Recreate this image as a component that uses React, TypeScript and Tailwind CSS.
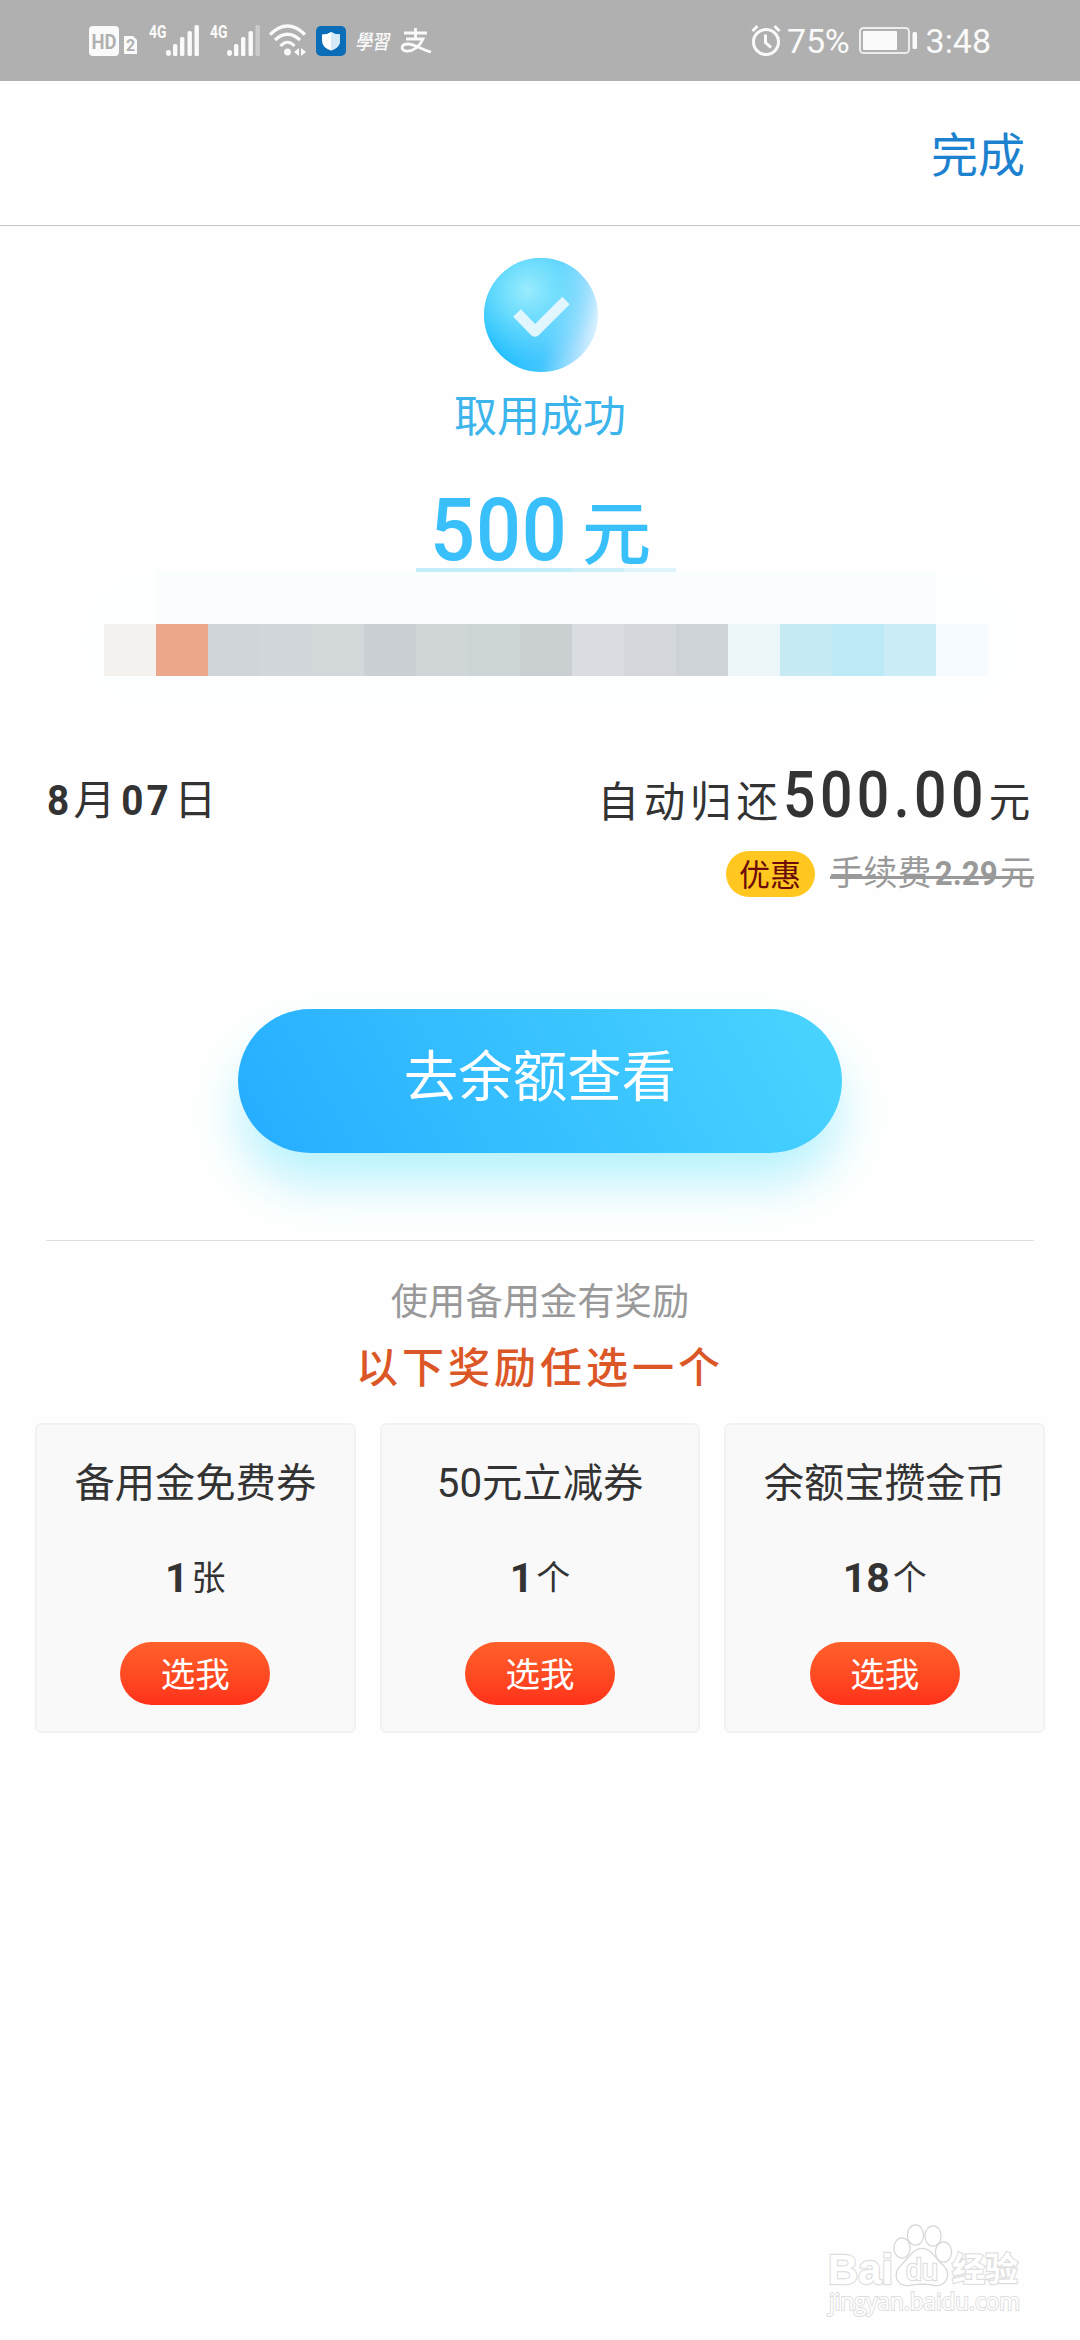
import type { ReactNode } from "react";

interface Reward {
  title: string;
  count: string;
  unit: string;
}

const rewards: Reward[] = [
  { title: "备用金免费券", count: "1", unit: "张" },
  { title: "50元立减券", count: "1", unit: "个" },
  { title: "余额宝攒金币", count: "18", unit: "个" },
];

const mosaic = [
  "bg-[#f5f1ee]",
  "bg-[#eda88b]",
  "bg-[#cfd5d9]",
  "bg-[#d2d7db]",
  "bg-[#d3d8da]",
  "bg-[#cbd0d4]",
  "bg-[#d0d5d8]",
  "bg-[#cdd4d6]",
  "bg-[#cad0d2]",
  "bg-[#d9dde1]",
  "bg-[#d4d8dc]",
  "bg-[#ced3d7]",
  "bg-[#edf6f8]",
  "bg-[#c7ebf5]",
  "bg-[#bde9f6]",
  "bg-[#c9ecf6]",
  "bg-[#f6fbff]",
];

function Signal({ weak = false }: { weak?: boolean }) {
  return (
    <svg className="overflow-visible" width="51" height="34" viewBox="0 0 51 34" fill="#fafafa">
      <text x="0" y="13.5" fontFamily="Roboto" fontWeight="700" fontSize="17.5" textLength="17.5" lengthAdjust="spacingAndGlyphs">
        4G
      </text>
      <rect x="17" y="26" width="5" height="6" rx="2.4" />
      <rect x="24" y="20" width="4.4" height="12" rx="1.6" />
      <rect x="31" y="13" width="4.4" height="19" rx="1.6" />
      <rect x="38.5" y="7" width="4.4" height="25" rx="1.6" />
      <rect x="45.5" y="1" width="4.4" height="31" rx="1.6" fill={weak ? "#cbcbcb" : "#fafafa"} />
    </svg>
  );
}

function StatusBar() {
  return (
    <div className="flex h-[81px] items-start bg-[#b0b0b0] pt-6 text-[#fafafa]">
      <svg className="ml-[89px]" width="50" height="34" viewBox="0 0 50 34">
        <rect x="0" y="2" width="30" height="30" rx="4" fill="#fafafa" />
        <text x="2.5" y="24.5" fontFamily="Roboto" fontWeight="700" fontSize="20" fill="#b0b0b0" textLength="25" lengthAdjust="spacingAndGlyphs">
          HD
        </text>
        <path d="M35 12h9l4 4v14h-13z" fill="#fafafa" />
        <text x="37" y="27" fontFamily="Roboto" fontWeight="700" fontSize="16" fill="#b0b0b0">
          2
        </text>
      </svg>
      <div className="ml-[10px]">
        <Signal />
      </div>
      <div className="ml-[10px]">
        <Signal weak />
      </div>
      <svg className="ml-2" width="38" height="34" viewBox="0 0 38 34" fill="none" stroke="#fafafa" strokeWidth="3.2">
        <path d="M1 10.5Q18.5 -6.5 36 10.5" />
        <path d="M6 16Q18.5 4.5 31 16" />
        <path d="M11.5 22Q18.5 14.5 25.5 22" />
        <circle cx="18.5" cy="28" r="3.4" fill="#fafafa" stroke="none" />
        <path d="M30 24v8l-5-4zM32 32v-8l5 4z" fill="#fafafa" stroke="none" />
      </svg>
      <svg className="ml-[9px]" width="30" height="34" viewBox="0 0 30 34">
        <rect y="2" width="30" height="30" rx="5" fill="#0b6cb8" />
        <path d="M15 8q4 2.5 9 2.5v6q0 7-9 10q-9-3-9-10v-6q5 0 9-2.5z" fill="#fff" />
        <path d="M15 8q4 2.5 9 2.5v6q0 7-9 10z" fill="#d5e9f6" />
      </svg>
      <span className="ml-[11px] h-8 w-[33px] origin-left scale-x-[0.85] -skew-x-12 font-['Noto_Sans_CJK_TC',sans-serif] text-[20px] leading-[34px] font-medium whitespace-nowrap">
        學習
      </span>
      <svg className="ml-[10px]" width="32" height="34" viewBox="0 0 32 34" fill="none" stroke="#fafafa" strokeWidth="2.8">
        <path d="M4 9h23M15.5 4v11M6 15h17C20 22 13 28 6 27C0 26 1 20 8 20C15 20 22 26 31 28" />
      </svg>
      <svg className="ml-[319px]" width="30" height="34" viewBox="0 0 30 34" fill="none" stroke="#fafafa" strokeWidth="3">
        <circle cx="15" cy="18" r="12.5" />
        <path d="M14.5 10.5v8l5.5 5M1.5 7l5-5M28.5 7l-5-5" />
      </svg>
      <span className="ml-[6px] font-['Roboto',sans-serif] text-[34px] leading-[35px] tracking-[-0.2px]">75%</span>
      <svg className="ml-[9px]" width="58" height="34" viewBox="0 0 58 34">
        <rect x="1" y="4" width="49" height="25" rx="3.5" fill="none" stroke="#ececec" strokeWidth="2" />
        <rect x="4" y="7" width="34" height="19" rx="1" fill="#fafafa" />
        <rect x="53.5" y="8" width="4.5" height="17" rx="1.5" fill="#fafafa" />
      </svg>
      <span className="ml-[9px] font-['Roboto',sans-serif] text-[34px] leading-[35px]">3:48</span>
    </div>
  );
}

function SuccessIcon() {
  return (
    <svg className="ml-px" width="114" height="114" viewBox="0 0 114 114">
      <defs>
        <linearGradient id="base" x1="0.1" y1="0.6" x2="1" y2="0.75">
          <stop offset="0" stopColor="#16bdfd" />
          <stop offset="0.5" stopColor="#43c6fe" />
          <stop offset="0.8" stopColor="#a5dffe" />
          <stop offset="1" stopColor="#e4f5ff" />
        </linearGradient>
        <radialGradient id="shine" cx="0.38" cy="0.28" r="0.65">
          <stop offset="0" stopColor="#9becfd" />
          <stop offset="0.4" stopColor="#7ce3fd" stopOpacity="0.8" />
          <stop offset="1" stopColor="#7cdcfe" stopOpacity="0" />
        </radialGradient>
      </defs>
      <circle cx="57" cy="57" r="57" fill="url(#base)" />
      <circle cx="57" cy="57" r="57" fill="url(#shine)" />
      <path d="M33 55L51 73.5L82 42.5" fill="none" stroke="#e2f6fe" strokeWidth="10.5" strokeLinejoin="round" />
    </svg>
  );
}

function Result() {
  return (
    <section className="flex flex-col items-center pt-8">
      <SuccessIcon />
      <p className="mt-[9px] h-[64px] text-[43px] leading-[64px] text-[#3cb4ec]">取用成功</p>
      <div className="mt-[41px] ml-3 flex h-[82px] w-[260px] items-start text-[#39c0fa]">
        <span className="ml-[14px] w-[138px] origin-left scale-x-[0.9] font-['Roboto',sans-serif] text-[88px] leading-[88px] font-medium tracking-[1px] whitespace-nowrap">
          500
        </span>
        <span className="ml-[14px] text-[69px] leading-[86px] font-medium">元</span>
      </div>
      <div className="ml-3 flex h-1 w-[260px]">
        <div className="w-[156px] bg-[#c2eefa]" />
        <div className="w-[52px] bg-[#ceeffa]" />
        <div className="w-[52px] bg-[#def3fc]" />
      </div>
    </section>
  );
}

function MaskedNotice() {
  return (
    <div className="ml-[82px] h-[136px] w-[938px] rounded-[68px] bg-[#fdfefe]">
      <div className="ml-[74px] h-[52px] w-[780px] bg-[#f9fdfe]" />
      <div className="ml-[22px] flex">
        {mosaic.map((color, index) => (
          <div key={index} className={`size-[52px] shrink-0 ${color}`} />
        ))}
      </div>
    </div>
  );
}

function Digits({ children }: { children: ReactNode }) {
  return <b className="inline-block scale-x-[0.92] font-['Roboto',sans-serif] font-bold">{children}</b>;
}

function Repayment() {
  return (
    <section className="mt-[46px] flex justify-between pr-[46px] pl-[46px] text-[#333]">
      <p className="h-[80px] text-[42px] leading-[85px] tracking-[3.5px]">
        <Digits>8</Digits>月<Digits>07</Digits>日
      </p>
      <div className="flex flex-col items-end">
        <div className="flex h-[96px] items-baseline text-[41.5px] leading-[82px] tracking-[4.8px]">
          自动归还
          <span className="-mr-[24px] w-[230px] origin-left scale-x-[0.88] font-['Roboto',sans-serif] text-[65px] font-medium tracking-[5px]">
            500.00
          </span>
          <span className="-mr-px">元</span>
        </div>
        <div className="mt-px flex items-center">
          <span className="flex h-[46px] w-[89px] items-center justify-center rounded-full bg-[#ffc71f] pb-[3px] text-[31px] leading-[43px] text-[#6d0b0b]">
            优惠
          </span>
          <span className="relative ml-[15px] h-[46px] text-[34px] leading-[40px] text-[#999]">
            手续费<Digits>2.29</Digits>元
            <span className="absolute inset-x-0 top-[25px] h-[3px] bg-[#999]" />
          </span>
        </div>
      </div>
    </section>
  );
}

function RewardCard({ title, count, unit }: Reward) {
  return (
    <div className="flex h-[310px] flex-col items-center rounded-md border-2 border-[#f2f2f2] bg-[#f9f9f9] pt-[29px] text-[#333]">
      <h3 className="h-[60px] font-['Roboto','Noto_Sans_CJK_SC',sans-serif] text-[40.3px] leading-[60px]">{title}</h3>
      <p className="mt-[37px] flex h-[60px] items-baseline text-[34px] leading-[54px]">
        <b className="mr-[3px] font-['Roboto',sans-serif] text-[41px]">{count}</b>
        <span className="-translate-y-[2px]">{unit}</span>
      </p>
      <button className="mt-[31px] h-[63px] w-[150px] rounded-full bg-linear-to-b from-[#ff602b] to-[#ff301a] pb-[3px] text-[34.5px] leading-[60px] text-white">
        选我
      </button>
    </div>
  );
}

// Outlined white lettering with the paw mark
function Watermark() {
  return (
    <svg
      className="absolute right-[56px] bottom-[20px]"
      width="200"
      height="100"
      viewBox="0 0 200 100"
      fill="#fff"
      stroke="#dedede"
      strokeWidth="2.4"
      paintOrder="stroke"
    >
      <text x="4" y="64" fontFamily="Liberation Sans" fontWeight="700" fontSize="43" textLength="65" lengthAdjust="spacingAndGlyphs">
        Bai
      </text>
      <g stroke="#d6d6d6" strokeWidth="2.4">
        <path d="M98 29C107 29 111 39 119 46C127 54 122 66 111 65C102 63 94 63 85 65C73 66 69 54 77 46C85 39 89 29 98 29z" />
        <ellipse cx="78" cy="28" rx="7.5" ry="9.5" />
        <ellipse cx="91.5" cy="15" rx="7.5" ry="9.5" />
        <ellipse cx="109" cy="16" rx="7.5" ry="9.5" />
        <ellipse cx="119.5" cy="32" rx="7.5" ry="9.5" />
      </g>
      <text x="82" y="60" fontFamily="Liberation Sans" fontSize="29" textLength="32" lengthAdjust="spacingAndGlyphs">
        du
      </text>
      <text x="128" y="61" fontFamily="Noto Sans CJK SC" fontWeight="700" fontSize="33">
        经验
      </text>
      <text x="5" y="90" fontFamily="Open Sans" fontSize="23" strokeWidth="2" textLength="191" lengthAdjust="spacingAndGlyphs">
        jingyan.baidu.com
      </text>
    </svg>
  );
}

export default function App() {
  return (
    <div className="relative h-[2340px] w-[1080px] overflow-hidden bg-[#fefefe] font-['Noto_Sans_CJK_SC',sans-serif]">
      <StatusBar />
      <header className="flex h-[145px] items-center justify-end border-b border-[#c4c4c4] bg-white pr-[55px] pb-[2px]">
        <button className="text-[47px] leading-[70px] text-[#1c82cf]">完成</button>
      </header>
      <Result />
      <MaskedNotice />
      <Repayment />
      <button className="mx-auto mt-[112px] flex h-[144px] w-[604px] justify-center rounded-full bg-linear-[60deg] from-[#25adff] to-[#4ad5ff] text-[54.5px] leading-[128px] text-white shadow-[0_32px_50px_-4px_#b4f2fe]">
        去余额查看
      </button>
      <section className="mt-[87px]">
        <div className="mx-[46px] h-px bg-[#dedede]" />
        <p className="mt-[31px] text-center text-[37.3px] leading-[54px] text-[#999]">使用备用金有奖励</p>
        <h2 className="mt-[9px] text-center text-[42px] leading-[60px] font-medium tracking-[4px] text-[#dc5727]">
          以下奖励任选一个
        </h2>
        <div className="mx-[35px] mt-[28px] grid grid-cols-3 gap-[24px]">
          {rewards.map((reward) => (
            <RewardCard key={reward.title} {...reward} />
          ))}
        </div>
      </section>
      <Watermark />
    </div>
  );
}
